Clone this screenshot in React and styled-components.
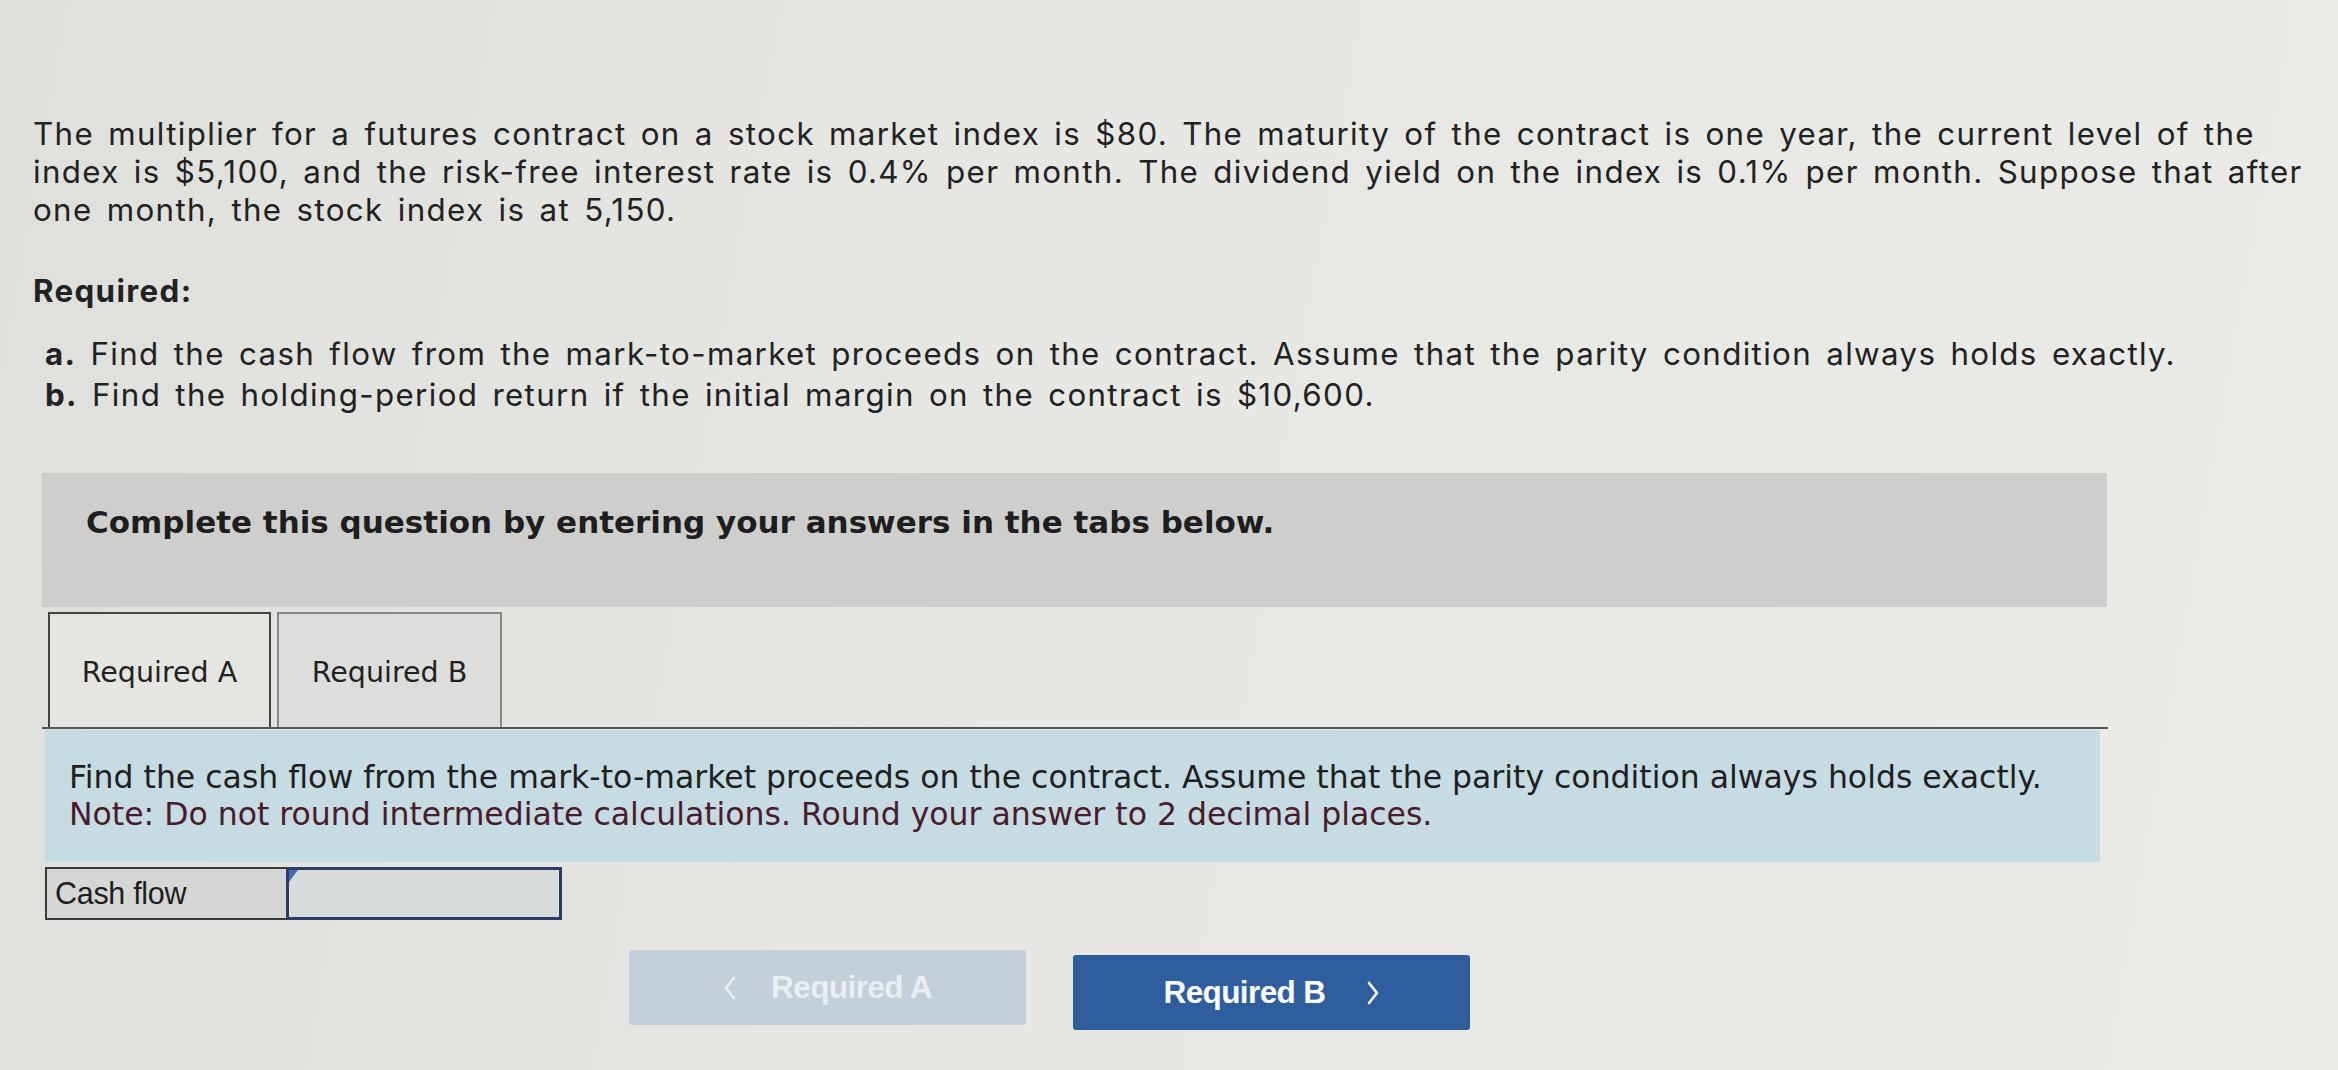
import React from 'react'
import styled, { createGlobalStyle } from 'styled-components'

const GlobalStyle = createGlobalStyle`
  html, body {
    margin: 0;
    padding: 0;
  }
  body {
    background: linear-gradient(100deg, #dfe0dc 0%, #e7e8e4 45%, #eaebe7 100%);
    color: #2a2a2a;
    font-family: Inter, 'Lato', sans-serif;
  }
`

const Page = styled.div`
  width: 2338px;
  height: 1070px;
  box-sizing: border-box;
  padding: 115px 0 0 33px;
  overflow: hidden;
`

const Problem = styled.div`
  font-family: Inter, 'Lato', sans-serif;
  font-size: 31.3px;
  line-height: 38px;
  letter-spacing: 1.35px;
  word-spacing: 4px;
  color: #222;
`

const Para = styled.p`
  margin: 0;
`

const ReqBlock = styled.div`
  margin-top: 43px;
`

const ReqTitle = styled.div`
  font-weight: 700;
  margin-bottom: 24px;
`

const ReqItem = styled.div`
  padding-left: 12px;
  line-height: 41px;
  b {
    font-weight: 700;
  }
`

const Panel = styled.div`
  margin-top: 57px;
  margin-left: 9px;
  width: 2065px;
`

const Instruction = styled.div`
  background: #cecfcd;
  height: 134px;
  box-sizing: border-box;
  padding: 31px 44px 0;
  font-family: 'DejaVu Sans', Verdana, sans-serif;
  font-weight: 700;
  font-size: 31px;
  color: #1e1e1e;
`

const TabRow = styled.div`
  margin-top: 5px;
  display: flex;
  gap: 6px;
  padding-left: 6px;
  width: 2060px;
  border-bottom: 2px solid #555;
`

const Tab = styled.div`
  width: ${p => (p.$active ? 223 : 225)}px;
  height: 115px;
  box-sizing: border-box;
  display: flex;
  align-items: center;
  justify-content: center;
  font-family: 'DejaVu Sans', Verdana, sans-serif;
  font-size: 28.5px;
  color: #222;
  background: ${p => (p.$active ? '#e5e6e2' : '#dddedb')};
  border: 2px solid ${p => (p.$active ? '#444' : '#888')};
  border-bottom: none;
  margin-bottom: ${p => (p.$active ? '-2px' : '0')};
  padding-top: 4px;
`

const Prompt = styled.div`
  margin-top: 1px;
  margin-left: 3px;
  width: 2055px;
  height: 132px;
  box-sizing: border-box;
  background: #c7dbe2;
  padding: 29px 24px 0;
  font-family: 'DejaVu Sans', Verdana, sans-serif;
  font-size: 31.5px;
  line-height: 37px;
  color: #1f1f1f;
`

const Note = styled.div`
  color: #4a1b2c;
`

const AnswerRow = styled.div`
  margin-top: 5px;
  margin-left: 3px;
  display: flex;
  height: 53px;
`

const Label = styled.div`
  width: 241px;
  box-sizing: border-box;
  border: 2px solid #3a3a3a;
  border-right: none;
  background: #d6d7d5;
  display: flex;
  align-items: center;
  padding-left: 8px;
  font-family: 'Liberation Sans', Arial, sans-serif;
  font-size: 30.5px;
  letter-spacing: -0.3px;
  color: #1e1e1e;
`

const Input = styled.div`
  position: relative;
  width: 276px;
  box-sizing: border-box;
  border: 3px solid #2e3d63;
  background: #d9dcdc;
  &::before {
    content: '';
    position: absolute;
    left: 0;
    top: 0;
    border-top: 12px solid #3b6db0;
    border-right: 9px solid transparent;
  }
`

const Nav = styled.div`
  margin-top: 30px;
  padding-left: 587px;
  display: flex;
  gap: 47px;
  align-items: flex-start;
`

const NavButton = styled.div`
  width: 397px;
  height: 75px;
  box-sizing: border-box;
  border-radius: 3px;
  display: flex;
  align-items: center;
  justify-content: center;
  gap: ${p => (p.$disabled ? 34 : 40)}px;
  margin-top: ${p => (p.$disabled ? 0 : 5)}px;
  background: ${p => (p.$disabled ? '#c3cfd9' : '#2e5e9e')};
  color: ${p => (p.$disabled ? '#e9eef2' : '#ffffff')};
  font-family: 'Liberation Sans', Arial, sans-serif;
  font-weight: 700;
  font-size: 31.5px;
  letter-spacing: -0.6px;
`

const Chevron = ({ dir }) => (
  <svg width="14" height="26" viewBox="0 0 14 26" fill="none">
    <path
      d={dir === 'left' ? 'M11 3 L3 13 L11 23' : 'M3 3 L11 13 L3 23'}
      stroke="currentColor"
      strokeWidth="2.6"
      strokeLinecap="round"
      strokeLinejoin="round"
    />
  </svg>
)

function App() {
  return (
    <React.Fragment>
      <GlobalStyle />
      <Page>
        <Problem>
          <Para>
            The multiplier for a futures contract on a stock market index is $80. The maturity of the contract is one year, the current level of the
            <br />
            index is $5,100, and the risk-free interest rate is 0.4% per month. The dividend yield on the index is 0.1% per month. Suppose that after
            <br />
            one month, the stock index is at 5,150.
          </Para>
          <ReqBlock>
            <ReqTitle>Required:</ReqTitle>
            <ReqItem>
              <b>a.</b> Find the cash flow from the mark-to-market proceeds on the contract. Assume that the parity condition always holds exactly.
            </ReqItem>
            <ReqItem>
              <b>b.</b> Find the holding-period return if the initial margin on the contract is $10,600.
            </ReqItem>
          </ReqBlock>
        </Problem>

        <Panel>
          <Instruction>Complete this question by entering your answers in the tabs below.</Instruction>
          <TabRow>
            <Tab $active>Required A</Tab>
            <Tab>Required B</Tab>
          </TabRow>
          <Prompt>
            <div>Find the cash flow from the mark-to-market proceeds on the contract. Assume that the parity condition always holds exactly.</div>
            <Note>Note: Do not round intermediate calculations. Round your answer to 2 decimal places.</Note>
          </Prompt>
          <AnswerRow>
            <Label>Cash flow</Label>
            <Input />
          </AnswerRow>
          <Nav>
            <NavButton $disabled>
              <Chevron dir="left" />
              <span>Required A</span>
            </NavButton>
            <NavButton>
              <span>Required B</span>
              <Chevron dir="right" />
            </NavButton>
          </Nav>
        </Panel>
      </Page>
    </React.Fragment>
  )
}

export default App
